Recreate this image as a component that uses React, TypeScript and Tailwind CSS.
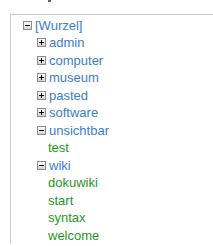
import React from 'react';

type Node = { name: string; kind: 'ns' | 'page'; open?: boolean; children?: Node[] };

const tree: Node = {
  name: '[Wurzel]',
  kind: 'ns',
  open: true,
  children: [
    { name: 'admin', kind: 'ns' },
    { name: 'computer', kind: 'ns' },
    { name: 'museum', kind: 'ns' },
    { name: 'pasted', kind: 'ns' },
    { name: 'software', kind: 'ns' },
    { name: 'unsichtbar', kind: 'ns', open: true, children: [{ name: 'test', kind: 'page' }] },
    {
      name: 'wiki',
      kind: 'ns',
      open: true,
      children: [
        { name: 'dokuwiki', kind: 'page' },
        { name: 'start', kind: 'page' },
        { name: 'syntax', kind: 'page' },
        { name: 'welcome', kind: 'page' },
      ],
    },
  ],
};

function Toggle({ open }: { open?: boolean }) {
  return (
    <svg width="9" height="9" viewBox="0 0 9 9" className="shrink-0">
      <defs>
        <linearGradient id="tg" x1="0" y1="0" x2="0" y2="1">
          <stop offset="0" stopColor="#ffffff" />
          <stop offset="1" stopColor="#d4d0c8" />
        </linearGradient>
      </defs>
      <rect x="0.5" y="0.5" width="8" height="8" fill="url(#tg)" stroke="#8c8c8c" />
      <rect x="2" y="4" width="5" height="1" fill="#000" />
      {!open && <rect x="4" y="2" width="1" height="5" fill="#000" />}
    </svg>
  );
}

function Row({ node, nested }: { node: Node; nested?: boolean }) {
  if (node.kind === 'page') {
    return (
      <li>
        <div className="flex h-[17.5px] items-center pl-[11px] text-[#1e9a1e]">{node.name}</div>
      </li>
    );
  }
  return (
    <li className={nested ? 'pl-[14px]' : ''}>
      <div className="flex h-[17.5px] items-center gap-[3px] text-[#3b7dd0]">
        <Toggle open={node.open} />
        <span>{node.name}</span>
      </div>
      {node.open && node.children && (
        <ul>
          {node.children.map((c) => (
            <Row key={c.name} node={c} nested />
          ))}
        </ul>
      )}
    </li>
  );
}

export default function App() {
  return (
    <div className="h-[246px] w-[213px] overflow-hidden bg-white font-['Liberation_Sans',Arial,sans-serif] text-[13px] leading-none">
      <div className="h-[14px]">
        <div className="ml-[48px] h-[2px] w-[3px] bg-[#666]" />
      </div>
      <div className="ml-[10px] border-l border-t border-[#cccccc] pl-[12px] pt-[1.5px]">
        <ul>
          <Row node={tree} />
        </ul>
      </div>
    </div>
  );
}
